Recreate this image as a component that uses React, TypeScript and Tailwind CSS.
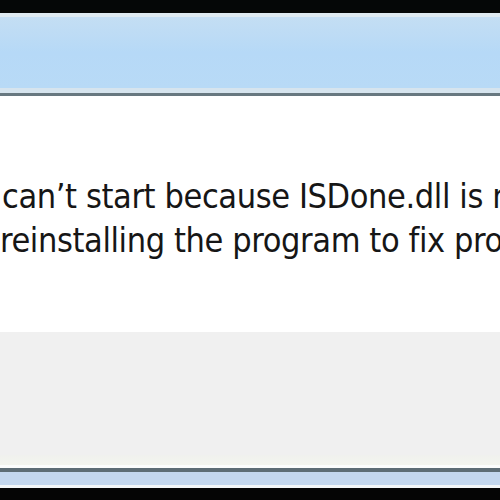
export default function App() {
  return (
    <div className="w-[500px] h-[500px] overflow-hidden flex flex-col bg-black">
      {/* top window frame */}
      <div className="h-[13px] bg-[#050707]" />
      <div className="h-[4px] bg-[#dfeaf0]" />
      <div className="h-[71px] bg-gradient-to-b from-[#c4def3] via-[#b6d9f7] to-[#b8daf6]" />
      <div className="h-[5px] bg-[#d6e4ee]" />
      <div className="h-[3px] bg-[#687880]" />

      {/* message area */}
      <div className="h-[236px] bg-white flex flex-col pt-[78px] font-['DejaVu_Sans_Condensed','DejaVu_Sans',sans-serif] text-[#161616] text-[34px] leading-[44px] tracking-[-0.4px] whitespace-nowrap">
        <p className="pl-[2px]">can’t start because ISDone.dll is missing</p>
        <p>reinstalling the program to fix problem.</p>
      </div>

      {/* button strip */}
      <div className="h-[123px] bg-[#f0f0f0]" />
      <div className="h-[10px] bg-gradient-to-b from-[#f0f1ee] to-[#f3f5ee]" />
      <div className="h-[3px] bg-[#fbfdfc]" />
      <div className="h-[4px] bg-[#5d6d75]" />
      <div className="h-[13px] bg-[#c3d7ee]" />
      <div className="h-[3px] bg-[#f2f6f8]" />
      <div className="flex-1 bg-[#050505]" />
    </div>
  )
}
